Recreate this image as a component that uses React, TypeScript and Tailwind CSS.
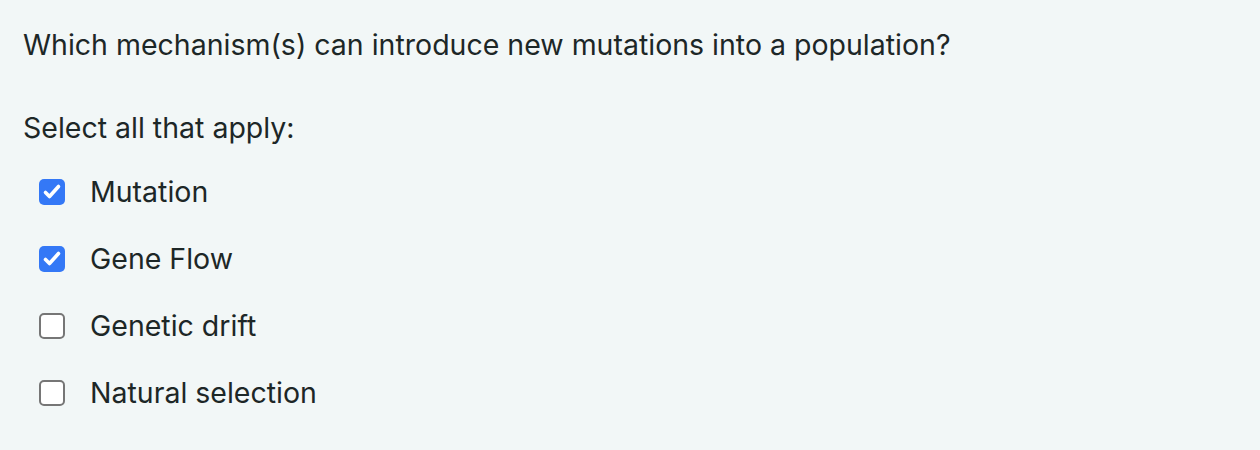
import { useState } from 'react';

const options = [
  { id: 'mutation', label: 'Mutation', checked: true },
  { id: 'gene-flow', label: 'Gene Flow', checked: true },
  { id: 'drift', label: 'Genetic drift', checked: false },
  { id: 'selection', label: 'Natural selection', checked: false },
];

function Box({ checked }: { checked: boolean }) {
  if (checked) {
    return (
      <span className="flex h-[26px] w-[26px] shrink-0 items-center justify-center rounded-[5px] bg-[#3478f6]">
        <svg width="26" height="26" viewBox="0 0 26 26" fill="none" stroke="white" strokeWidth="3.6" strokeLinecap="round" strokeLinejoin="round">
          <path d="M6.5 13.5 10.5 17.5 19.5 7.5" />
        </svg>
      </span>
    );
  }
  return <span className="h-[26px] w-[26px] shrink-0 rounded-[5px] border-2 border-[#767676] bg-white" />;
}

export default function App() {
  const [state, setState] = useState(options.map((o) => o.checked));

  return (
    <div className="min-h-[450px] bg-[#f2f7f7] px-[23px] pt-[26px] font-['Inter','Liberation_Sans',sans-serif] text-[#1d2727]">
      <p className="text-[28.5px] leading-[38px]">Which mechanism(s) can introduce new mutations into a population?</p>
      <p className="mt-[45px] text-[28.5px] leading-[38px]">Select all that apply:</p>
      <div className="mt-[26px] flex flex-col gap-[29px] pl-[16px]">
        {options.map((o, i) => (
          <label key={o.id} className="flex h-[38px] cursor-pointer items-center gap-[25px] text-[28.5px]" onClick={() => setState((s) => s.map((v, j) => (j === i ? !v : v)))}>
            <Box checked={state[i]} />
            <span>{o.label}</span>
          </label>
        ))}
      </div>
    </div>
  );
}
